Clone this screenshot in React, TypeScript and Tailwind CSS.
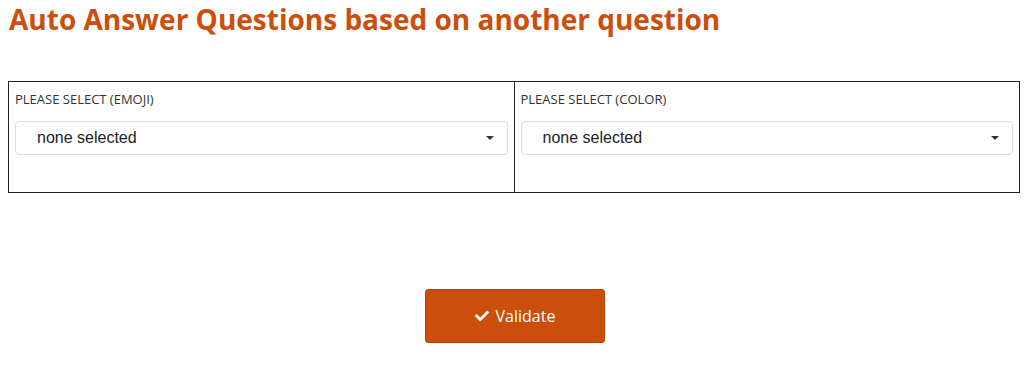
import { FaCheck } from 'react-icons/fa';

function SelectCell({ label, last }: { label: string; last?: boolean }) {
  return (
    <div className={`flex-1 px-[6px] pt-[9px] pb-[37px] ${last ? '' : 'border-r border-[#222]'}`}>
      <div className="text-[13px] leading-[16px] text-[#333] uppercase">{label}</div>
      <div className="mt-[14px] h-[34px] flex items-center justify-between rounded-[4px] border border-[#ddd] bg-white pl-[21px] pr-[13px]">
        <span className="text-[16px] text-[#222] font-['Liberation_Sans',Arial,sans-serif]">none selected</span>
        <span className="w-0 h-0 border-l-[4px] border-r-[4px] border-t-[4px] border-l-transparent border-r-transparent border-t-[#333]" />
      </div>
    </div>
  );
}

export default function App() {
  return (
    <div className="w-[1035px] h-[378px] bg-white font-['Open_Sans',sans-serif] pl-[8px] pr-[15px]">
      <h1 className="pl-[1px] pt-[1px] text-[28px] leading-[36px] font-bold text-[#cc4e0b]">
        Auto Answer Questions based on another question
      </h1>
      <div className="mt-[44px] flex border border-[#222]">
        <SelectCell label="Please select (emoji)" />
        <SelectCell label="Please select (color)" last />
      </div>
      <div className="mt-[96px] flex justify-center">
        <button className="w-[180px] h-[54px] ml-[2px] flex items-center justify-center gap-[7px] rounded-[3px] bg-[#cc4e0b] border border-[#b54408] text-white text-[16px]">
          <FaCheck className="w-[14px] h-[14px]" />
          Validate
        </button>
      </div>
    </div>
  );
}
